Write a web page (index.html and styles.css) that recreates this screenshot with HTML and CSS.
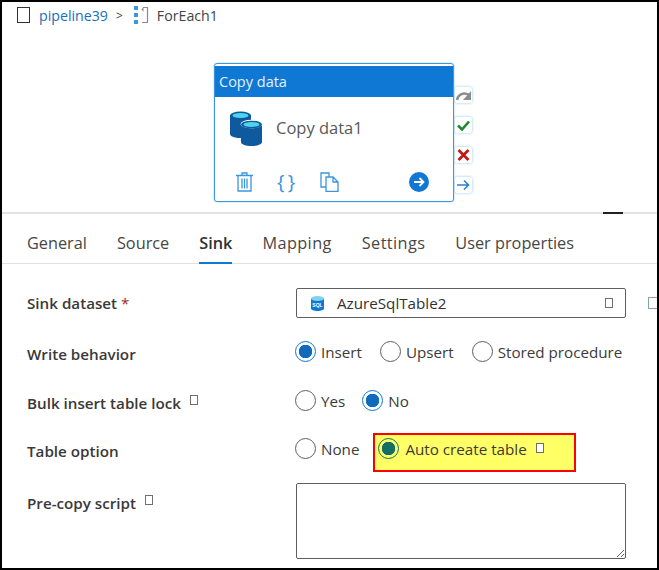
FILE: index.html
```html
<!DOCTYPE html>
<html lang="en">
<head>
<meta charset="utf-8">
<title>ForEach1 - Sink</title>
<link rel="stylesheet" href="styles.css">
</head>
<body>
<div class="frame">
  <header class="crumbs">
    <span class="tofu tofu-lg"></span>
    <a class="crumb-link">pipeline39</a>
    <span class="crumb-sep">&gt;</span>
    <svg class="crumb-icon" width="15" height="18" viewBox="0 0 15 18"><rect x="0" y="0" width="4" height="4" fill="#3a96dd"/><rect x="0" y="7" width="4" height="4" fill="#3a96dd"/><rect x="0" y="14" width="4" height="4" fill="#3a96dd"/><path d="M9 1.500h4.500v15H8" fill="none" stroke="#8a8a8a" stroke-width="1.200"/><path d="M7.500 3.500 9.500 .8v5z" fill="#8a8a8a"/></svg>
    <span class="crumb-current">ForEach1</span>
  </header>

  <section class="canvas">
    <div class="node">
      <div class="node-title">Copy data</div>
      <div class="node-body">
        <svg class="node-db" width="33" height="36" viewBox="0 0 33 36">
          <path d="M0 4v19c0 2 4 4 10.500 4s10.500-2 10.500-4V4z" fill="#0f5a9e"/>
          <ellipse cx="10.500" cy="4.500" rx="10.500" ry="4" fill="#0f5a9e"/>
          <ellipse cx="10.500" cy="4.500" rx="8" ry="2.600" fill="#50d4ee"/>
          <path d="M11 13v18c0 2.500 5 4 10.500 4S32 33.500 32 31V13z" fill="#0f5a9e"/>
          <ellipse cx="21.500" cy="13" rx="11" ry="4.300" fill="#fff"/>
          <ellipse cx="21.500" cy="13.500" rx="10.500" ry="3.800" fill="#0f5a9e"/>
          <ellipse cx="21.500" cy="13.500" rx="8" ry="2.500" fill="#50d4ee"/>
        </svg>
        <span class="node-name">Copy data1</span>
      </div>
      <div class="node-tools">
        <svg width="17" height="20" viewBox="0 0 17 20" fill="none" stroke="#3a96dd" stroke-width="1.300"><path d="M0 3.500h17M6 3.500V1h5v2.500M2 3.500v15.500h13V3.500M6 6.500v10M8.500 6.500v10M11 6.500v10"/></svg>
        <span class="brace">{ }</span>
        <svg width="19" height="20" viewBox="0 0 19 20" fill="none" stroke="#3a96dd" stroke-width="1.300"><path d="M6 15H1V1h8l0 4M6 5h7l5 5v9.500H6zM13 5v5h5"/></svg>
        <svg class="go" width="20" height="20" viewBox="0 0 20 20"><circle cx="10" cy="10" r="10" fill="#0f78d4"/><path d="M5 10h9M10.500 6l4 4-4 4" fill="none" stroke="#fff" stroke-width="1.800"/></svg>
      </div>
    </div>
    <div class="ports">
      <span class="port"><svg width="16" height="13" viewBox="0 0 16 13"><path d="M1 11C2 5 8 3 13 6" fill="none" stroke="#8c8c8c" stroke-width="2.500"/><path d="M15 2v9H7z" fill="#8c8c8c"/></svg></span>
      <span class="port"><svg width="13" height="11" viewBox="0 0 13 11"><path d="M1 5.500 5 9.500 12 1.500" fill="none" stroke="#1e8a2e" stroke-width="2.600"/></svg></span>
      <span class="port"><svg width="13" height="12" viewBox="0 0 13 12"><path d="M1.500 1 11.500 11M11.500 1 1.500 11" fill="none" stroke="#c21a1a" stroke-width="2.800"/></svg></span>
      <span class="port"><svg width="13" height="12" viewBox="0 0 13 12"><path d="M0 6h11.500M7 1.500 11.500 6 7 10.500" fill="none" stroke="#2f7fc8" stroke-width="1.600"/></svg></span>
    </div>
  </section>

  <section class="panel">
    <span class="panel-mark"></span>
    <nav class="tabs">
      <span class="tab">General</span>
      <span class="tab">Source</span>
      <span class="tab tab-active">Sink</span>
      <span class="tab tab-wide">Mapping</span>
      <span class="tab tab-wide">Settings</span>
      <span class="tab">User properties</span>
    </nav>

    <div class="form">
      <div class="row row-dataset">
        <div class="label label-dataset">Sink dataset <span class="req">*</span></div>
        <div class="dataset">
          <svg class="sql" width="13" height="15" viewBox="0 0 13 15"><path d="M0 2.500v10c0 1.500 3 2.500 6.500 2.500s6.500-1 6.500-2.500v-10z" fill="#0f78d4"/><ellipse cx="6.500" cy="2.500" rx="6.500" ry="2.500" fill="#7fd3ee"/><text x="6.500" y="10.500" class="sql-text">SQL</text></svg>
          <span class="dataset-name">AzureSqlTable2</span>
          <span class="tofu"></span>
        </div>
        <span class="tofu tofu-edge"></span>
      </div>

      <div class="row row-write">
        <div class="label">Write behavior</div>
        <div class="radios">
          <span class="radio-item"><span class="radio on"></span>Insert</span>
          <span class="radio-item"><span class="radio"></span>Upsert</span>
          <span class="radio-item"><span class="radio"></span>Stored procedure</span>
        </div>
      </div>

      <div class="row row-bulk">
        <div class="label">Bulk insert table lock <span class="tofu tofu-up"></span></div>
        <div class="radios radios-bulk">
          <span class="radio-item"><span class="radio"></span>Yes</span>
          <span class="radio-item"><span class="radio on"></span>No</span>
        </div>
      </div>

      <div class="row row-table">
        <div class="label">Table option</div>
        <div class="radios radios-table">
          <span class="radio-item"><span class="radio"></span>None</span>
          <span class="highlight"><span class="radio on on-green"></span>Auto create table <span class="tofu tofu-auto"></span></span>
        </div>
      </div>

      <div class="row row-script">
        <div class="label label-script">Pre-copy script <span class="tofu tofu-up"></span></div>
        <textarea class="script-box" aria-label="Pre-copy script"></textarea>
      </div>
    </div>
  </section>
</div>
</body>
</html>
```

FILE: styles.css
```css
* { box-sizing: border-box; }
html, body { margin: 0; padding: 0; background: #fff; }
body {
  font-family: "Open Sans", "Noto Sans", "Liberation Sans", sans-serif;
  color: #323130;
}
.frame {
  width: 659px;
  height: 570px;
  border: 2px solid #000;
  display: flex;
  flex-direction: column;
  overflow: hidden;
  background: #fff;
}
.tofu {
  display: inline-block;
  width: 8px;
  height: 10px;
  border: 1px solid #6f6f6f;
  background: #fff;
}
.crumbs {
  display: flex;
  align-items: center;
  height: 26px;
  padding-left: 15px;
  font-size: 14.200px;
}
.tofu-lg { width: 13px; height: 16px; border-color: #333; }
.crumb-link { color: #1a6dbd; margin-left: 9px; }
.crumb-sep { margin-left: 8px; font-size: 12px; color: #444; }
.crumb-icon { margin-left: 11px; }
.crumb-current { margin-left: 8px; color: #444; }

.canvas {
  position: relative;
  height: 184px;
  flex: none;
}
.node {
  position: absolute;
  left: 212px;
  top: 35px;
  width: 240px;
  height: 139px;
  border: 1px solid #3a96dd;
  border-radius: 3px;
  display: flex;
  flex-direction: column;
  box-shadow: 0 0 2px #8cc4ee;
}
.node-title {
  margin-top: 2px;
  height: 31px;
  line-height: 31px;
  background: #0f78d4;
  color: #e6f2fb;
  font-size: 14.500px;
  padding-left: 4px;
  flex: none;
}
.node-body {
  display: flex;
  align-items: center;
  height: 64px;
  padding-left: 15px;
}
.node-name { margin-left: 13px; margin-top: -3px; font-size: 16.500px; color: #595959; }
.node-tools {
  display: flex;
  align-items: center;
  padding-left: 21px;
  height: 32px;
  margin-top: 5px;
}
.brace { margin-left: 24px; color: #3a96dd; font-size: 20px; line-height: 20px; width: 24px; white-space: nowrap; letter-spacing: -1px; }
.node-tools svg:nth-of-type(2) { margin-left: 19px; }
.go { margin-left: 70px; }
.ports {
  position: absolute;
  left: 453px;
  top: 59px;
  display: flex;
  flex-direction: column;
  gap: 14px;
}
.port {
  width: 17px;
  height: 16px;
  display: flex;
  align-items: center;
  justify-content: center;
  background: #fff;
  box-shadow: 0 0 3px #8cc4ee;
  border-radius: 2px;
}

.panel {
  position: relative;
  flex: 1;
  border-top: 2px solid #e1e1e1;
}
.panel-mark {
  position: absolute;
  left: 601px;
  top: -2px;
  width: 20px;
  height: 2px;
  background: #222;
}
.tabs {
  display: flex;
  gap: 30px;
  height: 50px;
  padding-left: 25px;
  border-bottom: 1px solid #e1e1e1;
  font-size: 16.300px;
}
.tab {
  height: 50px;
  line-height: 59px;
  color: #484644;
}
.tab-wide { letter-spacing: 0.4px; }
.tab-active {
  font-weight: 600;
  color: #323130;
  border-bottom: 2px solid #0f78d4;
}
.form { padding-left: 25px; font-size: 15.200px; }
.row {
  display: grid;
  grid-template-columns: 269px 330px auto;
  align-items: start;
}
.label {
  font-size: 15.200px;
  font-weight: 600;
  line-height: 20px;
  margin-top: 8px;
  color: #3a3938;
}
.label-dataset { margin-top: 5px; }
.label-script { margin-top: 10px; }
.req { color: #a4262c; font-weight: 400; }
.row-dataset { margin-top: 24px; height: 30px; }
.row-write { margin-top: 18px; height: 30px; }
.row-bulk { margin-top: 19px; height: 30px; }
.row-table { margin-top: 18px; height: 39px; }
.row-script { margin-top: 11px; height: 76px; }
.dataset {
  height: 30px;
  width: 330px;
  border: 1px solid #605e5c;
  border-radius: 2px;
  display: flex;
  align-items: center;
  padding: 0 12px 0 14px;
}
.sql { flex: none; }
.sql-text { font: 700 5px "Liberation Sans", sans-serif; fill: #fff; text-anchor: middle; }
.dataset-name { margin-left: 13px; flex: 1; }
.tofu-edge { margin-left: 22px; margin-top: 9px; width: 10px; height: 12px; border-color: #c08a9a #7aa; }
.tofu-up { position: relative; top: -4px; margin-left: 5px; }
.radios { display: flex; align-items: flex-start; gap: 18px; margin-left: -1px; padding-top: 5px; line-height: 23px; }
.radios-bulk { gap: 17px; }
.radio-item { display: flex; align-items: flex-start; gap: 5px; color: #3b3a39; }
.radio {
  width: 21px;
  height: 21px;
  flex: none;
  border-radius: 50%;
  border: 1px solid #605e5c;
  background: #fff;
}
.radio.on {
  border-color: #0f78d4;
  background: radial-gradient(circle, #0f6cbd 0, #0f6cbd 6.500px, #fff 7px);
}
.radio.on-green {
  border-color: #136f63;
  background: radial-gradient(circle, #136f63 0, #136f63 6.500px, #ffff66 7px);
}
.radios-table { gap: 14px; padding-top: 0; }
.radios-table .radio-item { margin-top: 5px; }
.highlight {
  display: flex;
  align-items: flex-start;
  gap: 6px;
  width: 203px;
  height: 39px;
  padding: 3px 0 0 3px;
  background: #ffff66;
  border: 2px solid #f00;
  color: #3b3a39;
}
.tofu-auto { margin: 5px 0 0 3px; }
.script-box {
  width: 330px;
  height: 76px;
  border: 1px solid #605e5c;
  border-radius: 2px;
  background: #fff;
  padding: 0;
  margin: 0;
  display: block;
}
```
